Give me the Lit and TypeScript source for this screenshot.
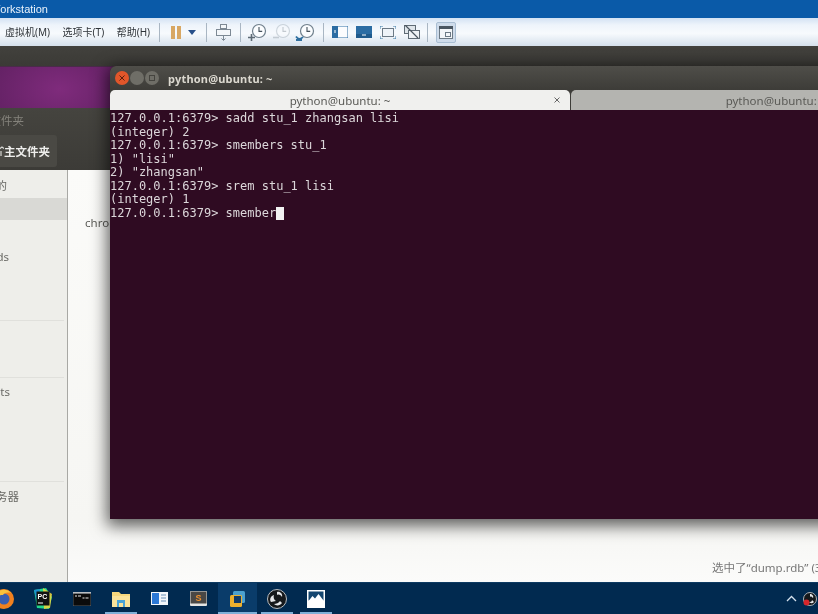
import { LitElement, html, css, svg } from "lit";
import { customElement } from "lit/decorators.js";

const clock = (extra: unknown, dim = false) => svg`
  <svg width="22" height="20" viewBox="0 0 22 20" fill="none" opacity=${dim ? 0.28 : 1}>
    <circle cx="12" cy="9" r="6.5" fill="#fbfdff" stroke="#6f7f8c" stroke-width="1.2"/>
    <path d="M12 5v4.400h3.200" stroke="#46525c" stroke-width="1.100"/>
    ${extra}
  </svg>`;

@customElement("app-root")
export class AppRoot extends LitElement {
  static styles = css`
    :host { display: block; width: 818px; height: 614px; overflow: hidden; font-family: "Noto Sans", "Noto Sans CJK SC", sans-serif; }
    .page { width: 818px; height: 614px; display: flex; flex-direction: column; overflow: hidden; filter: blur(0.35px); }

    .titlebar { height: 18px; flex: none; background: #0a5aa8; display: flex; align-items: center; color: #e9f2fb; font-size: 11px; font-family: "Liberation Sans", sans-serif; }
    .crop { display: flex; justify-content: flex-end; overflow: hidden; white-space: nowrap; flex: none; }
    .crop-title { width: 48px; }

    .menubar { height: 28px; flex: none; display: flex; align-items: center; background: linear-gradient(#d3e2f3 0, #eef4fb 25%, #f7fafd 55%, #d5e0ec 100%); }
    .menu { width: 150px; flex: none; display: flex; gap: 12.500px; padding: 0 0 2px 5px; box-sizing: border-box; font-size: 10px; color: #2e3338; white-space: nowrap; }
    .cell { flex: none; display: flex; align-items: center; justify-content: center; height: 28px; }
    .w6 { width: 6px; } .w10 { width: 10px; } .w12 { width: 12px; } .w16 { width: 16px; } .w18 { width: 18px; } .w22 { width: 22px; } .w24 { width: 24px; }
    .sep { width: 1px; height: 19px; background: #a9b6c3; }
    .active { flex: none; width: 20px; height: 21px; margin-left: 6px; display: flex; align-items: center; justify-content: center; background: #cfdceb; border: 1px solid #a9bed3; box-sizing: border-box; border-radius: 2px; }

    .guest { flex: 1; position: relative; min-height: 0; overflow: hidden; display: flex; flex-direction: column; background: #fbfbfa; }
    .panel { height: 20px; flex: none; background: linear-gradient(#42413d, #3b3a36); }
    .banner { height: 42px; flex: none; background: radial-gradient(ellipse 90px 60px at 60px 22px, #7f2b7c, #5c1f5e 100%); border-top: 1px solid #4a2a4a; box-sizing: border-box; }
    .fmbar { height: 62px; flex: none; background: linear-gradient(#45443f, #3c3b37); display: flex; flex-direction: column; }
    .fmlabel { height: 23px; margin-bottom: 4px; flex: none; display: flex; align-items: center; font-size: 11.500px; color: #85837c; }
    .crop-fold { width: 24px; }
    .homebtn { width: 57px; height: 32px; flex: none; background: #4a4944; border-radius: 0 3px 3px 0; display: flex; align-items: center; justify-content: space-between; padding-right: 7px; box-sizing: border-box; color: #eeeeec; font-size: 11.500px; font-weight: 700; white-space: nowrap; overflow: hidden; }
    .fmbody { flex: 1; display: flex; min-height: 0; }

    .sidebar { width: 68px; flex: none; background: #eeeeea; border-right: 1px solid #a8a8a4; box-sizing: border-box; color: #6a6a66; font-size: 11.500px; display: flex; flex-direction: column; }
    .row { height: 22px; flex: none; display: flex; align-items: center; }
    .gap4 { height: 4px; flex: none; }
    .gap2 { height: 2px; flex: none; }
    .selected { background: #d9d9d5; }
    .spacer-a { height: 25px; flex: none; }
    .spacer-b { height: 53px; flex: none; }
    .spacer-c { height: 56px; flex: none; }
    .spacer-e { height: 79px; flex: none; }
    .spacer-f { height: 3px; flex: none; }
    .line { height: 1px; flex: none; width: 64px; background: #e0e0dc; }
    .c7 { width: 7px; } .c9 { width: 9px; } .c10 { width: 10px; } .c19 { width: 19px; }

    .content { flex: 1; display: flex; flex-direction: column; background: linear-gradient(#fbfbf9, #f6f6f3 85%, #fbfbfa); color: #5c5c58; min-width: 0; overflow: hidden; }
    .file { margin: 45px 0 0 17px; font-size: 11.500px; }
    .status { margin-top: auto; padding: 0 0 7px 644px; font-size: 11.500px; color: #777; white-space: nowrap; }

    .terminal { position: absolute; left: 110px; top: 20px; width: 880px; height: 453px; display: flex; flex-direction: column; border-radius: 6px 6px 0 0; box-shadow: 0 4px 16px 3px rgba(0, 0, 0, 0.62); background: #2f0b22; overflow: hidden; }
    .tbar { height: 24px; flex: none; background: linear-gradient(#4f4e49, #3d3c38); display: flex; align-items: center; padding-left: 5px; box-sizing: border-box; }
    .btn { width: 14px; height: 14px; border-radius: 50%; flex: none; margin-right: 1px; display: flex; align-items: center; justify-content: center; background: #6f6e67; }
    .btn-close { background: #e2562a; }
    .ttl { margin-left: 8px; color: #dcd9d0; font-size: 11px; font-weight: 700; letter-spacing: 0.2px; }
    .tabs { height: 20px; flex: none; display: flex; gap: 1px; background: #3d3c38; }
    .tab { height: 20px; display: flex; align-items: center; justify-content: center; position: relative; font-size: 11.500px; color: #5a5a56; flex: none; border-radius: 5px 5px 0 0; }
    .tab1 { width: 460px; background: #f0f0ee; }
    .tab2 { width: 410px; background: #b4b4b0; }
    .x { position: absolute; right: 10px; top: 7px; display: block; }
    .screen { flex: 1; color: #dcd7da; font-family: "DejaVu Sans Mono", monospace; font-size: 12px; line-height: 13.570px; padding-top: 2px; white-space: pre; }
    .cursor { display: inline-block; width: 8px; height: 13px; background: #f2f2f2; vertical-align: -3px; }

    .taskbar { height: 32px; flex: none; background: #012a50; display: flex; border-top: 1px solid #0d3a62; box-sizing: border-box; }
    .tasks { display: flex; margin-left: -16px; flex: 1; }
    .task { width: 39px; height: 31px; flex: none; display: flex; align-items: center; justify-content: center; box-sizing: border-box; }
    .open { background: linear-gradient(#7fb0d8, #7fb0d8) center bottom / 32px 2px no-repeat; }
    .focus { background: linear-gradient(#7fb0d8, #7fb0d8) center bottom / 100% 2px no-repeat, #0a3c6a; }
    .tray { display: flex; align-items: center; gap: 6px; padding-right: 1px; }
  `;

  render() {
    return html`<div class="page">
      <div class="titlebar"><div class="crop crop-title">VMware Workstation</div></div>

      <div class="menubar">
        <div class="menu"><span>虚拟机(M)</span><span>选项卡(T)</span><span>帮助(H)</span></div>
        <div class="cell w18"><div class="sep"></div></div>
        <div class="cell w16"><svg width="12" height="13" viewBox="0 0 12 13"><rect x="1" width="4" height="13" fill="#d8a763"/><rect x="7" width="4" height="13" fill="#d8a763"/></svg></div>
        <div class="cell w16"><svg width="8" height="5" viewBox="0 0 8 5"><path d="M0 0h8L4 5z" fill="#27508a"/></svg></div>
        <div class="cell w12"><div class="sep"></div></div>
        <div class="cell w22"><svg width="15" height="17" viewBox="0 0 15 17" fill="#f4f7fa" stroke="#7d8994"><rect x="4.500" y=".5" width="6" height="4"/><rect x=".5" y="5.500" width="14" height="6"/><path d="M7.500 12v4M5.500 14.500l2 2 2-2" fill="none"/></svg></div>
        <div class="cell w12"><div class="sep"></div></div>
        <div class="cell w24">${clock(svg`<path d="M1 15.500h7M4.500 12v7" stroke="#5d6a75" stroke-width="1.600"/>`)}</div>
        <div class="cell w24">${clock(svg`<path d="M2 15.500h6" stroke="#5d6a75" stroke-width="1.600"/>`, true)}</div>
        <div class="cell w24">${clock(svg`<path d="M1 14.500c2 3 5 3 7 .5M1 18h6" stroke="#2f6f9f" stroke-width="1.800"/>`)}</div>
        <div class="cell w10"><div class="sep"></div></div>
        <div class="cell w24"><svg width="16" height="12" viewBox="0 0 16 12"><rect width="16" height="12" fill="#fbfcfe" stroke="#2b6ca3"/><rect width="6" height="12" fill="#2b6ca3"/><rect x="2.500" y="4" width="1" height="3" fill="#fff"/></svg></div>
        <div class="cell w24"><svg width="16" height="12" viewBox="0 0 16 12"><rect width="16" height="12" fill="#2b6ca3"/><rect y="8" width="16" height="4" fill="#1f5a8c"/><rect x="6" y="8.500" width="4" height="1" fill="#fff"/></svg></div>
        <div class="cell w24"><svg width="16" height="13" viewBox="0 0 16 13" fill="none"><rect x="2.500" y="2.500" width="11" height="8" fill="#eef3f8" stroke="#6c7a86"/><path d="M0 3V0h3M13 0h3v3M16 10v3h-3M3 13H0v-3" stroke="#3f7ca6"/></svg></div>
        <div class="cell w24"><svg width="16" height="14" viewBox="0 0 16 14" fill="none"><rect x=".5" y=".5" width="11" height="8" fill="#dfe5ea" stroke="#5f6b75"/><rect x="4.500" y="5.500" width="11" height="8" fill="#eef2f5" stroke="#5f6b75"/><path d="M1 0l13 13" stroke="#4b5660" stroke-width="1.200"/></svg></div>
        <div class="cell w6"><div class="sep"></div></div>
        <div class="active"><svg width="14" height="13" viewBox="0 0 14 13"><rect x=".5" y=".5" width="13" height="12" fill="#f3f6f9" stroke="#6c7a86"/><rect width="14" height="3" fill="#4a5661"/><rect x="6.500" y="6.500" width="5" height="4" fill="none" stroke="#6c7a86"/></svg></div>
      </div>

      <div class="guest">
        <div class="panel"></div>
        <div class="banner"></div>
        <div class="fmbar">
          <div class="fmlabel"><div class="crop crop-fold">主文件夹</div></div>
          <div class="homebtn">
            <svg width="4" height="10" viewBox="0 0 4 10" fill="none"><path d="M-3 5l5-4 2 1.500M1 5v5" stroke="#d8d8d4" stroke-width="1.200"/></svg>
            <span>主文件夹</span>
          </div>
        </div>
        <div class="fmbody">
          <div class="sidebar">
            <div class="gap4"></div>
            <div class="row"><div class="crop c7">最近使用的</div></div>
            <div class="gap2"></div>
            <div class="row selected"></div>
            <div class="spacer-a"></div>
            <div class="row"><div class="crop c9">Downloads</div></div>
            <div class="spacer-b"></div>
            <div class="line"></div>
            <div class="spacer-c"></div>
            <div class="line"></div>
            <div class="gap2"></div>
            <div class="row"><div class="crop c10">Documents</div></div>
            <div class="spacer-e"></div>
            <div class="line"></div>
            <div class="spacer-f"></div>
            <div class="row"><div class="crop c19">连接到服务器</div></div>
          </div>
          <div class="content">
            <div class="file">chro</div>
            <div class="status">选中了“dump.rdb” (31 字节)</div>
          </div>
        </div>

        <div class="terminal">
          <div class="tbar">
            <div class="btn btn-close"><svg width="6" height="6" viewBox="0 0 6 6"><path d="M.5.5l5 5M5.500.5l-5 5" stroke="#5a1f0c" stroke-width="1"/></svg></div>
            <div class="btn"></div>
            <div class="btn"><svg width="6" height="6" viewBox="0 0 6 6"><rect x=".5" y=".5" width="5" height="5" fill="none" stroke="#45443f"/></svg></div>
            <span class="ttl">python@ubuntu: ~</span>
          </div>
          <div class="tabs">
            <div class="tab tab1">python@ubuntu: ~<svg class="x" width="6" height="6" viewBox="0 0 6 6"><path d="M.5.5l5 5M5.500.5l-5 5" stroke="#666" stroke-width="1"/></svg></div>
            <div class="tab tab2">python@ubuntu: ~</div>
          </div>
          <div class="screen">127.0.0.1:6379> sadd stu_1 zhangsan lisi
(integer) 2
127.0.0.1:6379> smembers stu_1
1) "lisi"
2) "zhangsan"
127.0.0.1:6379> srem stu_1 lisi
(integer) 1
127.0.0.1:6379> smember<span class="cursor"></span></div>
        </div>
      </div>

      <div class="taskbar">
        <div class="tasks">
          <div class="task"><svg width="22" height="22" viewBox="0 0 22 22"><circle cx="11" cy="11" r="10" fill="#f0811f"/><circle cx="11" cy="11" r="5.500" fill="#3a5fb0"/><path d="M3 6c3-5 11-6 15-1-4-1-7 0-8 2-3 0-5 1-7-1z" fill="#f9c23c"/></svg></div>
          <div class="task"><svg width="20" height="22" viewBox="0 0 20 22"><path d="M1 2l12-2 6 9-3 12L4 20z" fill="#21d789"/><path d="M10 0l9 6-2 14-6 1z" fill="#f5d33b" opacity=".85"/><path d="M1 2l6-1-3 13z" fill="#1c8fd0"/><rect x="3.500" y="3.500" width="13" height="14" fill="#111"/><text x="4.500" y="11" font-size="7" font-weight="700" fill="#fff" font-family="Liberation Sans">PC</text><rect x="5" y="14.500" width="5" height="1" fill="#fff"/></svg></div>
          <div class="task"><svg width="18" height="14" viewBox="0 0 18 14"><rect width="18" height="14" fill="#0b0b0b" stroke="#8a8f94" stroke-width=".6"/><rect width="18" height="1.600" fill="#b9bec3"/><path d="M2 4h2M5 4h3M9.500 6h2M12.500 6h3" stroke="#e8e8e8" stroke-width="1"/></svg></div>
          <div class="task open"><svg width="18" height="16" viewBox="0 0 18 16"><path d="M0 1h7l2 2h9v13H0z" fill="#f6d77d"/><rect y="5" width="18" height="11" fill="#fbe39a"/><rect x="5" y="9" width="8" height="7" fill="#4aa3d6"/><rect x="7" y="12" width="4" height="4" fill="#fbe39a"/></svg></div>
          <div class="task"><svg width="17" height="13" viewBox="0 0 17 13"><rect width="17" height="13" fill="#f2f6fb"/><rect x="1" y="1" width="7" height="11" fill="#2b78d6"/><path d="M10 3h5M10 6h5M10 9h5" stroke="#6a8fb8" stroke-width="1.200"/></svg></div>
          <div class="task"><svg width="17" height="15" viewBox="0 0 17 15"><rect width="17" height="15" rx="1" fill="#e4e4e2"/><rect x="0.500" y="0.500" width="16" height="12" fill="#4a4845"/><text x="5.500" y="10" font-size="9" font-weight="700" fill="#f0912c" font-family="Liberation Sans">S</text></svg></div>
          <div class="task focus"><svg width="17" height="18" viewBox="0 0 17 18"><rect x="4" y="1" width="12" height="12" rx="1.500" fill="#4ba0cf"/><rect x="1" y="5" width="12" height="12" rx="1.500" fill="#eeb02e"/><rect x="5" y="6" width="7" height="7" fill="#123a66"/></svg></div>
          <div class="task open"><svg width="20" height="20" viewBox="0 0 20 20" fill="none"><circle cx="10" cy="10" r="9.500" fill="#15181b" stroke="#b8bcc0"/><path d="M10 3c3-1 6 2 5 5-1-2-3-3-5-2zM4 13c-2-3 0-6 3-7-1 2 0 5 2 6zM15 14c-2 3-6 3-8 1 2 0 5-1 6-3z" fill="#e5e7ea"/></svg></div>
          <div class="task open"><svg width="18" height="18" viewBox="0 0 18 18"><rect width="18" height="18" fill="#fff"/><rect x="1.500" y="1.500" width="15" height="9" fill="#14466f"/><path d="M1.500 11l4-5 2.500 2.500L11.500 4l5 6.500V16.500h-15z" fill="#fff"/></svg></div>
        </div>
        <div class="tray">
          <svg width="11" height="7" viewBox="0 0 11 7" fill="none"><path d="M1 6l4.500-4.500L10 6" stroke="#d6e2ee" stroke-width="1.300"/></svg>
          <svg width="14" height="14" viewBox="0 0 14 14"><circle cx="7" cy="7" r="6.500" fill="#15181b" stroke="#aeb3b8"/><path d="M7 2c2 0 4 2 3 4-1-1-2-2-3-1zM11 10c-2 2-4 1-5 0 1 0 3 0 3-2z" fill="#e5e7ea"/><circle cx="3.500" cy="10.500" r="3" fill="#d8262b"/></svg>
        </div>
      </div>
    </div>`;
  }
}
